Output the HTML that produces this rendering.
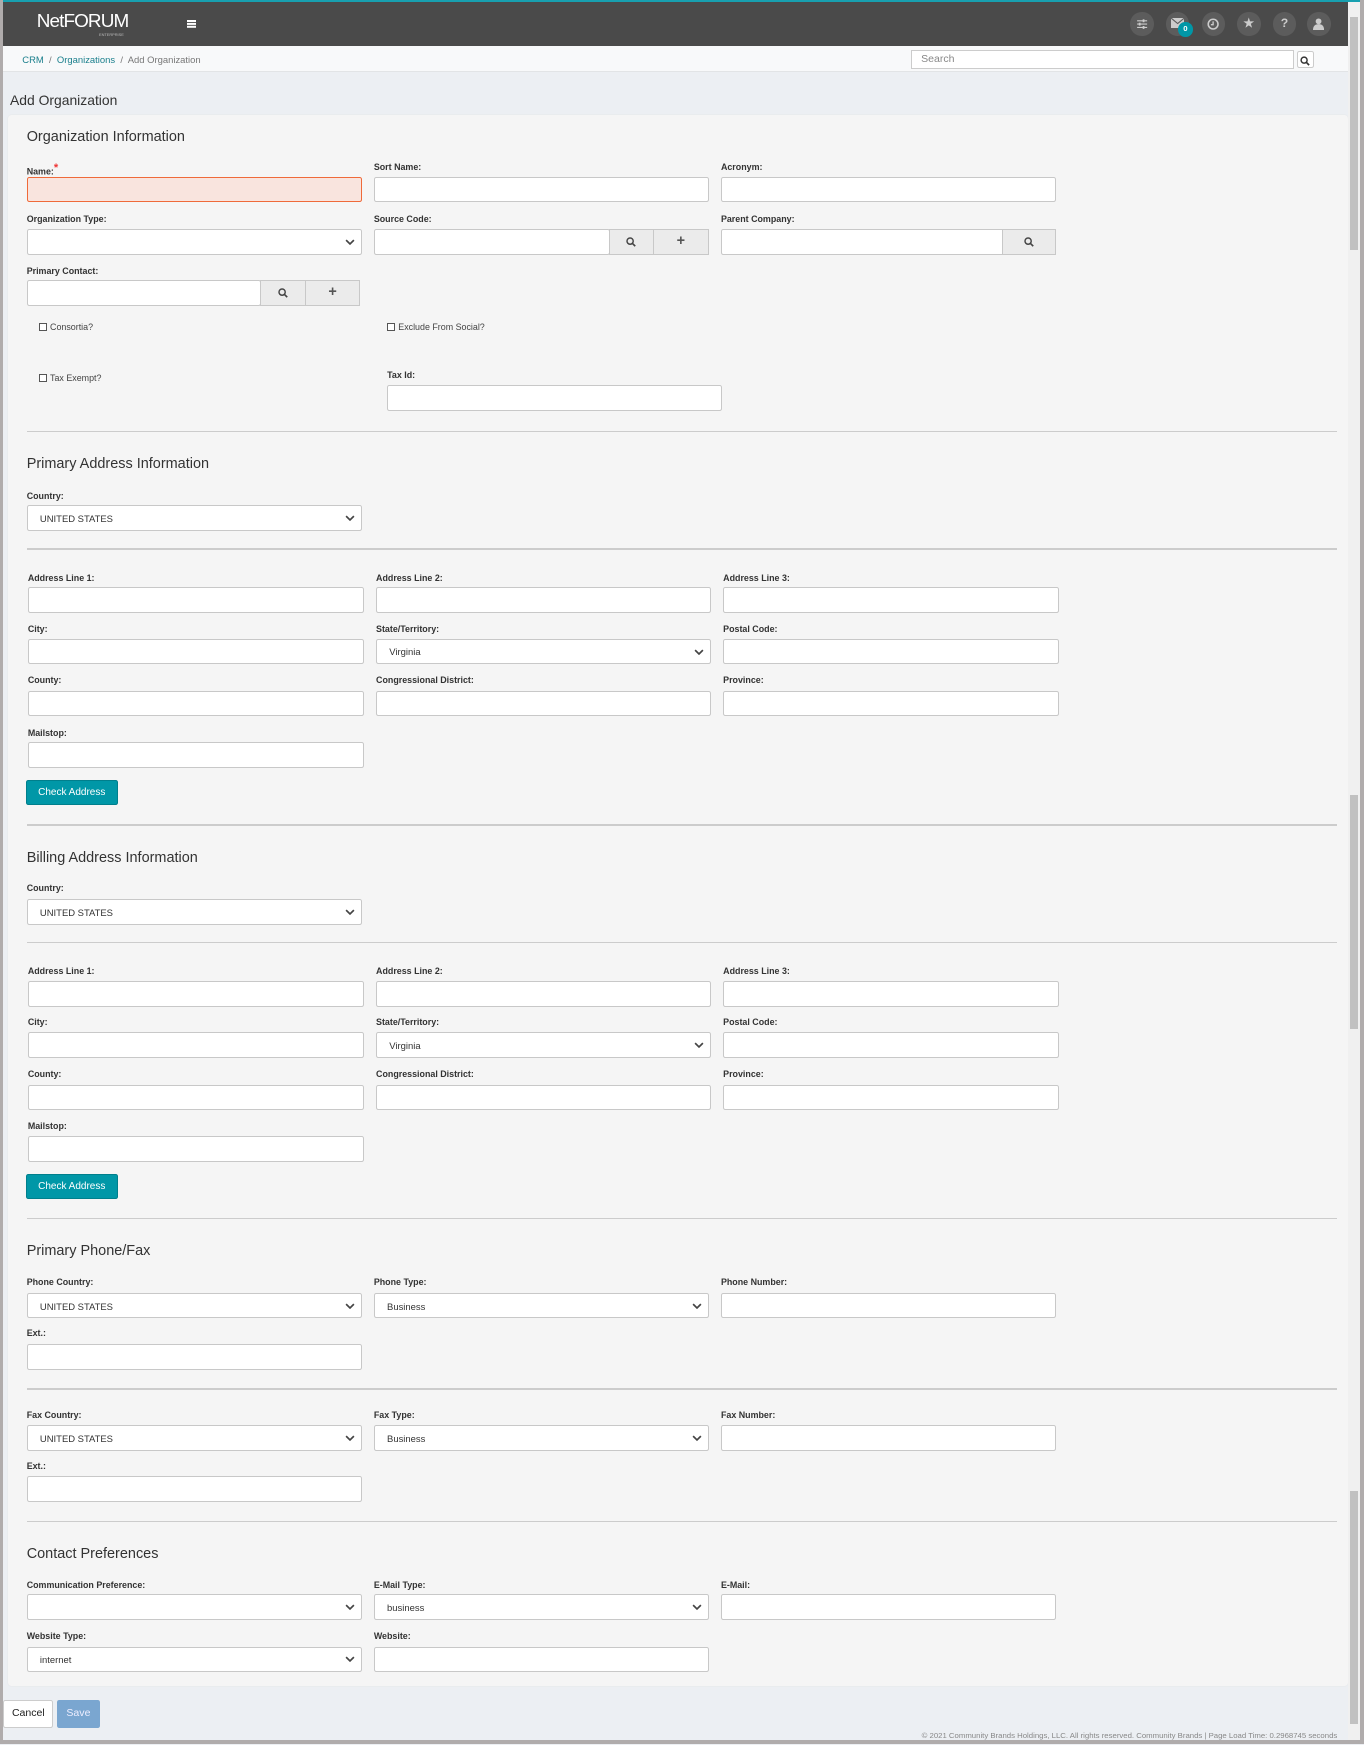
<!DOCTYPE html>
<html><head><meta charset="utf-8">
<style>
*{box-sizing:border-box;margin:0;padding:0}
html,body{width:1364px;height:1745px;overflow:hidden}
body{background:#eceff3;font-family:"Liberation Sans",sans-serif;color:#333}
#w{zoom:1.11256;position:relative;width:1226px;height:1568px;overflow:hidden;background:#eceff3}
.a{position:absolute}
.l{position:absolute;font-size:8px;font-weight:bold;color:#333}
.i{position:absolute;height:23px;background:#fff;border:1px solid #c8c8c8;border-radius:2px}
.s{position:absolute;height:23px;background:#fff;border:1px solid #c8c8c8;border-radius:2px;font-size:8.5px;padding:7px 11px;color:#333}
.s svg{position:absolute;right:5px;top:8px}
.h{position:absolute;font-size:13px;color:#333}
.hr{position:absolute;left:24px;width:1178px;height:1px;background:#ccc}
.b{position:absolute;height:23px;background:#ebebeb;border:1px solid #c8c8c8;text-align:center;font-size:13px;line-height:20px;color:#555;font-weight:bold}
.b svg{margin-top:6px}
.cb{position:absolute;font-size:8px;color:#444}
.cb i{display:inline-block;width:7px;height:7px;border:1px solid #555;margin-right:3px;vertical-align:-1px;background:#fff}
.btn{position:absolute;height:23px;background:#0097a7;border:1px solid #007f8c;border-radius:2px;color:#fff;font-size:9px;line-height:21px;text-align:center}
.ic{position:absolute;top:11px;width:21px;height:21px;border-radius:50%;background:#5c5c5c;color:#ccc;font-size:11px;text-align:center;line-height:21px;font-weight:bold}
</style></head><body><div id="w">
<div class="a" style="left:0;top:0;width:1226px;height:2px;background:#18a0b0"></div>
<div class="a" style="left:0;top:2px;width:1212px;height:39px;background:#4a4a4a"></div>
<div class="a" style="left:33px;top:10px;color:#fff;font-size:17px;letter-spacing:-0.8px">NetFORUM</div>
<div class="a" style="left:89px;top:29px;color:#bbb;font-size:3.5px">ENTERPRISE</div>
<div class="a" style="left:168px;top:18px;width:8px;height:1.6px;background:#fff;box-shadow:0 2.6px 0 #fff,0 5.2px 0 #fff"></div>
<div class="ic" style="left:1016px">
<svg width="11" height="11" viewBox="0 0 11 11" style="margin-top:5px"><path d="M1 2.5h9M1 5.5h9M1 8.5h9" stroke="#ccc" stroke-width="1"/><rect x="6" y="1.2" width="1.6" height="2.6" fill="#ccc"/><rect x="2.5" y="4.2" width="1.6" height="2.6" fill="#ccc"/><rect x="6" y="7.2" width="1.6" height="2.6" fill="#ccc"/></svg></div>
<div class="ic" style="left:1048px"><svg width="12" height="10" viewBox="0 0 12 10" style="margin-top:5px"><rect width="12" height="9" fill="#ccc"/><path d="M0 0l6 5 6-5" stroke="#5c5c5c" fill="none"/></svg></div>
<div class="a" style="left:1059px;top:20px;width:13px;height:13px;border-radius:50%;background:#0097a7;color:#fff;font-size:7px;font-weight:bold;text-align:center;line-height:13px">0</div>
<div class="ic" style="left:1080px"><svg width="11" height="11" viewBox="0 0 11 11" style="margin-top:5px"><circle cx="5.5" cy="5.5" r="4.4" stroke="#ccc" stroke-width="1.4" fill="none"/><path d="M5.5 3v3H3.5" stroke="#ccc" stroke-width="1.2" fill="none"/></svg></div>
<div class="ic" style="left:1112px">★</div>
<div class="ic" style="left:1144px">?</div>
<div class="ic" style="left:1175px"><svg width="10" height="11" viewBox="0 0 10 11" style="margin-top:5px"><circle cx="5" cy="3" r="2.6" fill="#ccc"/><path d="M0 11c0-4 2-5.5 5-5.5s5 1.5 5 5.5z" fill="#ccc"/></svg></div>
<div class="a" style="left:0;top:41px;width:1212px;height:24px;background:#f8f9fa;border-bottom:1px solid #e2e4e6"></div>
<div class="a" style="left:20px;top:49px;font-size:8.5px;color:#777"><span style="color:#1a7f8c">CRM</span> &nbsp;/&nbsp; <span style="color:#1a7f8c">Organizations</span> &nbsp;/&nbsp; Add Organization</div>
<div class="a" style="left:819px;top:45px;width:344px;height:17px;background:#fff;border:1px solid #ccc;font-size:9.5px;color:#888;padding:2px 8px">Search</div>
<div class="a" style="left:1166px;top:46px;width:15px;height:15px;background:#fff;border:1px solid #ccc;border-radius:2px"><svg width="9" height="9" viewBox="0 0 9 9" style="margin:2px"><circle cx="3.7" cy="3.7" r="2.7" stroke="#333" stroke-width="1.3" fill="none"/><path d="M5.7 5.7l2.5 2.5" stroke="#333" stroke-width="1.5"/></svg></div>
<div class="a" style="left:9px;top:83px;font-size:12.5px;color:#333">Add Organization</div>
<div class="a" style="left:7px;top:103px;width:1205px;height:1412px;background:#f5f5f5;border-radius:3px;box-shadow:0 0 1px #ddd"></div>

<div class="h" style="left:24px;top:116px">Organization Information</div>
<div class="l" style="left:24px;top:146px">Name:<span style="color:#e33;font-size:10px;vertical-align:3px">*</span></div>
<div class="i" style="left:24px;top:159px;width:301px;background:#f9e4de;border-color:#ef6a3a"></div>
<div class="l" style="left:336px;top:146px">Sort Name:</div><div class="i" style="left:336px;top:159px;width:301px"></div>
<div class="l" style="left:648px;top:146px">Acronym:</div><div class="i" style="left:648px;top:159px;width:301px"></div>
<div class="l" style="left:24px;top:192px">Organization Type:</div>
<div class="s" style="left:24px;top:206px;width:301px"><svg width="9" height="6" viewBox="0 0 9 6"><path d="M1 1l3.5 3.5L8 1" stroke="#444" stroke-width="1.5" fill="none"/></svg></div>
<div class="l" style="left:336px;top:192px">Source Code:</div>
<div class="i" style="left:336px;top:206px;width:212px"></div><div class="b" style="left:547px;top:206px;width:41px"><svg width="9" height="9" viewBox="0 0 9 9"><circle cx="3.7" cy="3.7" r="2.8" stroke="#444" stroke-width="1.3" fill="none"/><path d="M5.8 5.8l2.5 2.5" stroke="#444" stroke-width="1.5"/></svg></div><div class="b" style="left:587px;top:206px;width:50px">+</div>
<div class="l" style="left:648px;top:192px">Parent Company:</div>
<div class="i" style="left:648px;top:206px;width:254px"></div><div class="b" style="left:901px;top:206px;width:48px"><svg width="9" height="9" viewBox="0 0 9 9"><circle cx="3.7" cy="3.7" r="2.8" stroke="#444" stroke-width="1.3" fill="none"/><path d="M5.8 5.8l2.5 2.5" stroke="#444" stroke-width="1.5"/></svg></div>
<div class="l" style="left:24px;top:239px">Primary Contact:</div>
<div class="i" style="left:24px;top:252px;width:211px"></div><div class="b" style="left:234px;top:252px;width:41px"><svg width="9" height="9" viewBox="0 0 9 9"><circle cx="3.7" cy="3.7" r="2.8" stroke="#444" stroke-width="1.3" fill="none"/><path d="M5.8 5.8l2.5 2.5" stroke="#444" stroke-width="1.5"/></svg></div><div class="b" style="left:274px;top:252px;width:50px">+</div>
<div class="cb" style="left:35px;top:289px"><i></i>Consortia?</div>
<div class="cb" style="left:348px;top:289px"><i></i>Exclude From Social?</div>
<div class="cb" style="left:35px;top:335px"><i></i>Tax Exempt?</div>
<div class="l" style="left:348px;top:333px">Tax Id:</div><div class="i" style="left:348px;top:346px;width:301px"></div>
<div class="hr" style="top:387px"></div>

<div class="h" style="left:24px;top:410px">Primary Address Information</div>
<div class="l" style="left:24px;top:441px">Country:</div>
<div class="s" style="left:24px;top:454px;width:301px">UNITED STATES<svg width="9" height="6" viewBox="0 0 9 6"><path d="M1 1l3.5 3.5L8 1" stroke="#444" stroke-width="1.5" fill="none"/></svg></div>
<div class="hr" style="top:493px"></div>
<div class="l" style="left:25px;top:515px">Address Line 1:</div><div class="i" style="left:25px;top:528px;width:302px"></div>
<div class="l" style="left:338px;top:515px">Address Line 2:</div><div class="i" style="left:338px;top:528px;width:301px"></div>
<div class="l" style="left:650px;top:515px">Address Line 3:</div><div class="i" style="left:650px;top:528px;width:302px"></div>
<div class="l" style="left:25px;top:561px">City:</div><div class="i" style="left:25px;top:574px;width:302px"></div>
<div class="l" style="left:338px;top:561px">State/Territory:</div>
<div class="s" style="left:338px;top:574px;width:301px">Virginia<svg width="9" height="6" viewBox="0 0 9 6"><path d="M1 1l3.5 3.5L8 1" stroke="#444" stroke-width="1.5" fill="none"/></svg></div>
<div class="l" style="left:650px;top:561px">Postal Code:</div><div class="i" style="left:650px;top:574px;width:302px"></div>
<div class="l" style="left:25px;top:607px">County:</div><div class="i" style="left:25px;top:621px;width:302px"></div>
<div class="l" style="left:338px;top:607px">Congressional District:</div><div class="i" style="left:338px;top:621px;width:301px"></div>
<div class="l" style="left:650px;top:607px">Province:</div><div class="i" style="left:650px;top:621px;width:302px"></div>
<div class="l" style="left:25px;top:654px">Mailstop:</div><div class="i" style="left:25px;top:667px;width:302px"></div>
<div class="btn" style="left:23px;top:701px;width:83px">Check Address</div>
<div class="hr" style="top:741px"></div>

<div class="h" style="left:24px;top:764px">Billing Address Information</div>
<div class="l" style="left:24px;top:794px">Country:</div>
<div class="s" style="left:24px;top:808px;width:301px">UNITED STATES<svg width="9" height="6" viewBox="0 0 9 6"><path d="M1 1l3.5 3.5L8 1" stroke="#444" stroke-width="1.5" fill="none"/></svg></div>
<div class="hr" style="top:847px"></div>
<div class="l" style="left:25px;top:868px">Address Line 1:</div><div class="i" style="left:25px;top:882px;width:302px"></div>
<div class="l" style="left:338px;top:868px">Address Line 2:</div><div class="i" style="left:338px;top:882px;width:301px"></div>
<div class="l" style="left:650px;top:868px">Address Line 3:</div><div class="i" style="left:650px;top:882px;width:302px"></div>
<div class="l" style="left:25px;top:914px">City:</div><div class="i" style="left:25px;top:928px;width:302px"></div>
<div class="l" style="left:338px;top:914px">State/Territory:</div>
<div class="s" style="left:338px;top:928px;width:301px">Virginia<svg width="9" height="6" viewBox="0 0 9 6"><path d="M1 1l3.5 3.5L8 1" stroke="#444" stroke-width="1.5" fill="none"/></svg></div>
<div class="l" style="left:650px;top:914px">Postal Code:</div><div class="i" style="left:650px;top:928px;width:302px"></div>
<div class="l" style="left:25px;top:961px">County:</div><div class="i" style="left:25px;top:975px;width:302px"></div>
<div class="l" style="left:338px;top:961px">Congressional District:</div><div class="i" style="left:338px;top:975px;width:301px"></div>
<div class="l" style="left:650px;top:961px">Province:</div><div class="i" style="left:650px;top:975px;width:302px"></div>
<div class="l" style="left:25px;top:1008px">Mailstop:</div><div class="i" style="left:25px;top:1021px;width:302px"></div>
<div class="btn" style="left:23px;top:1055px;width:83px">Check Address</div>
<div class="hr" style="top:1095px"></div>

<div class="h" style="left:24px;top:1117px">Primary Phone/Fax</div>
<div class="l" style="left:24px;top:1148px">Phone Country:</div>
<div class="s" style="left:24px;top:1162px;width:301px">UNITED STATES<svg width="9" height="6" viewBox="0 0 9 6"><path d="M1 1l3.5 3.5L8 1" stroke="#444" stroke-width="1.5" fill="none"/></svg></div>
<div class="l" style="left:336px;top:1148px">Phone Type:</div>
<div class="s" style="left:336px;top:1162px;width:301px">Business<svg width="9" height="6" viewBox="0 0 9 6"><path d="M1 1l3.5 3.5L8 1" stroke="#444" stroke-width="1.5" fill="none"/></svg></div>
<div class="l" style="left:648px;top:1148px">Phone Number:</div><div class="i" style="left:648px;top:1162px;width:301px"></div>
<div class="l" style="left:24px;top:1194px">Ext.:</div><div class="i" style="left:24px;top:1208px;width:301px"></div>
<div class="hr" style="top:1248px"></div>
<div class="l" style="left:24px;top:1267px">Fax Country:</div>
<div class="s" style="left:24px;top:1281px;width:301px">UNITED STATES<svg width="9" height="6" viewBox="0 0 9 6"><path d="M1 1l3.5 3.5L8 1" stroke="#444" stroke-width="1.5" fill="none"/></svg></div>
<div class="l" style="left:336px;top:1267px">Fax Type:</div>
<div class="s" style="left:336px;top:1281px;width:301px">Business<svg width="9" height="6" viewBox="0 0 9 6"><path d="M1 1l3.5 3.5L8 1" stroke="#444" stroke-width="1.5" fill="none"/></svg></div>
<div class="l" style="left:648px;top:1267px">Fax Number:</div><div class="i" style="left:648px;top:1281px;width:301px"></div>
<div class="l" style="left:24px;top:1313px">Ext.:</div><div class="i" style="left:24px;top:1327px;width:301px"></div>
<div class="hr" style="top:1367px"></div>

<div class="h" style="left:24px;top:1390px">Contact Preferences</div>
<div class="l" style="left:24px;top:1420px">Communication Preference:</div>
<div class="s" style="left:24px;top:1433px;width:301px"><svg width="9" height="6" viewBox="0 0 9 6"><path d="M1 1l3.5 3.5L8 1" stroke="#444" stroke-width="1.5" fill="none"/></svg></div>
<div class="l" style="left:336px;top:1420px">E-Mail Type:</div>
<div class="s" style="left:336px;top:1433px;width:301px">business<svg width="9" height="6" viewBox="0 0 9 6"><path d="M1 1l3.5 3.5L8 1" stroke="#444" stroke-width="1.5" fill="none"/></svg></div>
<div class="l" style="left:648px;top:1420px">E-Mail:</div><div class="i" style="left:648px;top:1433px;width:301px"></div>
<div class="l" style="left:24px;top:1466px">Website Type:</div>
<div class="s" style="left:24px;top:1480px;width:301px">internet<svg width="9" height="6" viewBox="0 0 9 6"><path d="M1 1l3.5 3.5L8 1" stroke="#444" stroke-width="1.5" fill="none"/></svg></div>
<div class="l" style="left:336px;top:1466px">Website:</div><div class="i" style="left:336px;top:1480px;width:301px"></div>

<div class="a" style="left:3px;top:1528px;width:45px;height:25px;background:#fff;border:1px solid #ccc;border-radius:2px;font-size:9.5px;line-height:23px;text-align:center;color:#222">Cancel</div>
<div class="a" style="left:51px;top:1528px;width:39px;height:25px;background:#7aa6d0;border-radius:2px;font-size:9.5px;line-height:25px;text-align:center;color:#eef">Save</div>
<div class="a" style="left:700px;top:1556px;width:502px;text-align:right;font-size:7px;color:#888">© 2021 Community Brands Holdings, LLC. All rights reserved. Community Brands | Page Load Time: 0.2968745 seconds</div>

<div class="a" style="left:1212px;top:2px;width:10px;height:1564px;background:#f0f0f0"></div>
<div class="a" style="left:1213px;top:15px;width:8px;height:210px;background:#c1c1c1"></div>
<div class="a" style="left:1213px;top:715px;width:8px;height:210px;background:#c1c1c1"></div>
<div class="a" style="left:1213px;top:1340px;width:8px;height:210px;background:#c1c1c1"></div>
<div class="a" style="left:1222px;top:0;width:4px;height:1568px;background:#b0acac"></div>
<div class="a" style="left:0;top:0;width:3px;height:1568px;background:#b0acac"></div>
<div class="a" style="left:0;top:1564px;width:1226px;height:4px;background:#b0acac"></div>
</div></body></html>
